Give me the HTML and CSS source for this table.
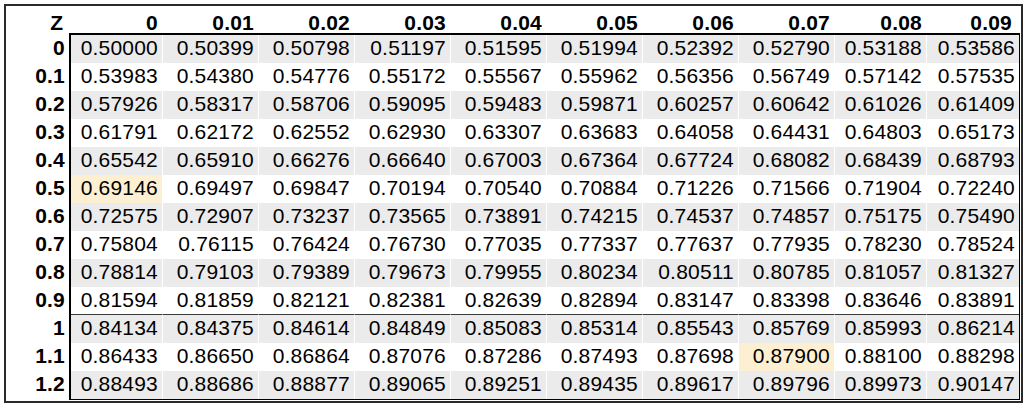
FILE: index.html
```html
<!DOCTYPE html>
<html>
<head>
<meta charset="utf-8">
<link rel="stylesheet" href="styles.css">
</head>
<body>
<div class="sheet">
  <div class="corner">Z</div>
  <div class="colheads">
    <div class="h n">0</div><div class="h">0.01</div><div class="h">0.02</div><div class="h">0.03</div><div class="h">0.04</div><div class="h">0.05</div><div class="h">0.06</div><div class="h">0.07</div><div class="h n">0.08</div><div class="h n last">0.09</div>
  </div>
  <div class="rowheads">
    <div class="rh">0</div><div class="rh">0.1</div><div class="rh">0.2</div><div class="rh">0.3</div><div class="rh">0.4</div><div class="rh">0.5</div><div class="rh">0.6</div><div class="rh">0.7</div><div class="rh">0.8</div><div class="rh">0.9</div><div class="rh">1</div><div class="rh">1.1</div><div class="rh">1.2</div>
  </div>
  <div class="data">
    <div class="row alt"><div class="c n">0.50000</div><div class="c">0.50399</div><div class="c">0.50798</div><div class="c">0.51197</div><div class="c">0.51595</div><div class="c">0.51994</div><div class="c">0.52392</div><div class="c">0.52790</div><div class="c n">0.53188</div><div class="c n">0.53586</div></div>
    <div class="row"><div class="c n">0.53983</div><div class="c">0.54380</div><div class="c">0.54776</div><div class="c">0.55172</div><div class="c">0.55567</div><div class="c">0.55962</div><div class="c">0.56356</div><div class="c">0.56749</div><div class="c n">0.57142</div><div class="c n">0.57535</div></div>
    <div class="row alt"><div class="c n">0.57926</div><div class="c">0.58317</div><div class="c">0.58706</div><div class="c">0.59095</div><div class="c">0.59483</div><div class="c">0.59871</div><div class="c">0.60257</div><div class="c">0.60642</div><div class="c n">0.61026</div><div class="c n">0.61409</div></div>
    <div class="row"><div class="c n">0.61791</div><div class="c">0.62172</div><div class="c">0.62552</div><div class="c">0.62930</div><div class="c">0.63307</div><div class="c">0.63683</div><div class="c">0.64058</div><div class="c">0.64431</div><div class="c n">0.64803</div><div class="c n">0.65173</div></div>
    <div class="row alt"><div class="c n">0.65542</div><div class="c">0.65910</div><div class="c">0.66276</div><div class="c">0.66640</div><div class="c">0.67003</div><div class="c">0.67364</div><div class="c">0.67724</div><div class="c">0.68082</div><div class="c n">0.68439</div><div class="c n">0.68793</div></div>
    <div class="row"><div class="c n hl">0.69146</div><div class="c">0.69497</div><div class="c">0.69847</div><div class="c">0.70194</div><div class="c">0.70540</div><div class="c">0.70884</div><div class="c">0.71226</div><div class="c">0.71566</div><div class="c n">0.71904</div><div class="c n">0.72240</div></div>
    <div class="row alt"><div class="c n">0.72575</div><div class="c">0.72907</div><div class="c">0.73237</div><div class="c">0.73565</div><div class="c">0.73891</div><div class="c">0.74215</div><div class="c">0.74537</div><div class="c">0.74857</div><div class="c n">0.75175</div><div class="c n">0.75490</div></div>
    <div class="row"><div class="c n">0.75804</div><div class="c">0.76115</div><div class="c">0.76424</div><div class="c">0.76730</div><div class="c">0.77035</div><div class="c">0.77337</div><div class="c">0.77637</div><div class="c">0.77935</div><div class="c n">0.78230</div><div class="c n">0.78524</div></div>
    <div class="row alt"><div class="c n">0.78814</div><div class="c">0.79103</div><div class="c">0.79389</div><div class="c">0.79673</div><div class="c">0.79955</div><div class="c">0.80234</div><div class="c">0.80511</div><div class="c">0.80785</div><div class="c n">0.81057</div><div class="c n">0.81327</div></div>
    <div class="row sep"><div class="c n">0.81594</div><div class="c">0.81859</div><div class="c">0.82121</div><div class="c">0.82381</div><div class="c">0.82639</div><div class="c">0.82894</div><div class="c">0.83147</div><div class="c">0.83398</div><div class="c n">0.83646</div><div class="c n">0.83891</div></div>
    <div class="row alt"><div class="c n">0.84134</div><div class="c">0.84375</div><div class="c">0.84614</div><div class="c">0.84849</div><div class="c">0.85083</div><div class="c">0.85314</div><div class="c">0.85543</div><div class="c">0.85769</div><div class="c n">0.85993</div><div class="c n">0.86214</div></div>
    <div class="row"><div class="c n">0.86433</div><div class="c">0.86650</div><div class="c">0.86864</div><div class="c">0.87076</div><div class="c">0.87286</div><div class="c">0.87493</div><div class="c">0.87698</div><div class="c hl">0.87900</div><div class="c n">0.88100</div><div class="c n">0.88298</div></div>
    <div class="row alt"><div class="c n">0.88493</div><div class="c">0.88686</div><div class="c">0.88877</div><div class="c">0.89065</div><div class="c">0.89251</div><div class="c">0.89435</div><div class="c">0.89617</div><div class="c">0.89796</div><div class="c n">0.89973</div><div class="c n">0.90147</div></div>
  </div>
</div>
</body>
</html>
```

FILE: styles.css
```css
html, body {
  margin: 0;
  padding: 0;
  background: #fff;
}
body {
  padding: 4px 0 0 4px;
  font-family: "Liberation Sans", Arial, sans-serif;
  font-size: 21px;
  color: #000;
}
.sheet {
  width: 1019px;
  height: 399px;
  box-sizing: border-box;
  border: 2px solid #2a2a2a;
  display: grid;
  grid-template-columns: 63px 951px;
  grid-template-rows: 27px 367px;
}
.corner {
  font-weight: bold;
  text-align: right;
  padding: 5px 6px 0 0;
  line-height: 23px;
}
.colheads {
  display: flex;
  padding-left: 2px;
}
.h {
  flex: 0 0 96px;
  box-sizing: border-box;
  font-weight: bold;
  text-align: right;
  padding: 5px 5px 0 0;
  line-height: 23px;
  letter-spacing: 0.2px;
}
.h.n {
  flex-basis: 92px;
}
.h.last {
  padding-right: 7px;
}
.rowheads {
  padding-top: 2px;
  display: flex;
  flex-direction: column;
}
.rh {
  height: 28px;
  line-height: 26px;
  font-weight: bold;
  text-align: right;
  padding-right: 4px;
  letter-spacing: 0.2px;
}
.data {
  border-top: 2px solid #000;
  border-left: 2px solid #000;
  border-right: 1px solid #000;
  border-bottom: 1px solid #000;
  display: flex;
  flex-direction: column;
}
.row {
  display: flex;
  height: 28px;
}
.c {
  flex: 0 0 96px;
  box-sizing: border-box;
  height: 28px;
  line-height: 26px;
  text-align: right;
  padding-right: 4px;
  border-right: 1px solid #fff;
  letter-spacing: 0.2px;
}
.c.n {
  flex-basis: 92px;
}
.row .c:last-child {
  border-right: 0;
}
.row.alt .c {
  background: #ebebeb;
}
.c.hl {
  background: #fdf0d2;
}
.row.sep .c {
  border-bottom: 1px solid #3a3a3a;
}
```
